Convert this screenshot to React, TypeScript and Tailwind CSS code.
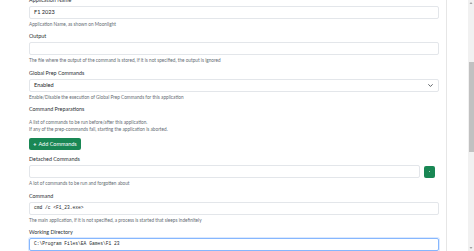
import React from "react";

const Label: React.FC<{ children: React.ReactNode; className?: string }> = ({ children, className = "" }) => (
  <div className={`h-[8px] leading-[8px] text-[5.4px] text-[#2b3035] mb-[2px] ${className}`}>{children}</div>
);

const Hint: React.FC<{ children: React.ReactNode }> = ({ children }) => (
  <div className="mt-[2px] h-[7px] leading-[7px] text-[4.7px] text-[#666d74]">{children}</div>
);

const Input: React.FC<{ value?: string; mono?: boolean; focused?: boolean; className?: string }> = ({
  value = "",
  mono = false,
  focused = false,
  className = "",
}) => (
  <div
    className={`h-[13px] rounded-[2px] border flex items-center px-[4px] text-[#212529] ${
      focused ? "border-[#86b7fe] shadow-[0_0_0_1px_rgba(13,110,253,0.15)]" : "border-[#e3e6ea]"
    } ${mono ? "font-['Liberation_Mono',monospace] text-[4.6px]" : "text-[5.6px]"} ${className}`}
  >
    {value}
  </div>
);

const App: React.FC = () => {
  return (
    <div className="w-[474px] h-[251px] overflow-hidden bg-white flex font-['Lato',sans-serif]">
      <div className="w-[447px] shrink-0 border-r border-[#e6e6e6] pl-[29px] pr-[7px] flex flex-col">
        <Label className="-mt-[4px]">Application Name</Label>
        <Input value="F1 2023" />
        <Hint>Application Name, as shown on Moonlight</Hint>

        <Label className="mt-[4.5px]">Output</Label>
        <Input />
        <Hint>The file where the output of the command is stored, if it is not specified, the output is ignored</Hint>

        <Label className="mt-[4.5px]">Global Prep Commands</Label>
        <div className="h-[13px] rounded-[2px] border border-[#e3e6ea] flex items-center justify-between px-[4px] text-[5.6px] text-[#212529]">
          <span>Enabled</span>
          <svg width="5" height="5" viewBox="0 0 16 16" className="mr-[1px]">
            <path d="M2 5l6 6 6-6" fill="none" stroke="#343a40" strokeWidth="2.5" strokeLinecap="round" strokeLinejoin="round" />
          </svg>
        </div>
        <Hint>Enable/Disable the execution of Global Prep Commands for this application</Hint>

        <Label className="mt-[4.5px] mb-0">Command Preparations</Label>
        <div className="mt-[3.5px] leading-[7px] text-[4.7px] text-[#666d74]">
          <div>A list of commands to be run before/after this application.</div>
          <div>If any of the prep-commands fail, starting the application is aborted.</div>
        </div>
        <div className="mt-[5.5px]">
          <button className="h-[12px] w-[52px] rounded-[2px] bg-[#198754] text-white text-[5.5px] flex items-center justify-center gap-[2px]">
            <span className="font-bold">+</span>
            <span>Add Commands</span>
          </button>
        </div>

        <Label className="mt-[5px]">Detached Commands</Label>
        <div className="flex items-center gap-[4px]">
          <Input className="flex-1" />
          <div className="w-[11px] h-[12px] rounded-[2px] bg-[#198754] flex items-center justify-center mr-[4px]">
            <div className="w-[1.5px] h-[1.5px] bg-white/80 rounded-full" />
          </div>
        </div>
        <Hint>A lot of commands to be run and forgotten about</Hint>

        <Label className="mt-[4.5px]">Command</Label>
        <Input value="cmd /c <F1_23.exe>" mono />
        <Hint>The main application, if it is not specified, a process is started that sleeps indefinitely</Hint>

        <Label className="mt-[4.5px]">Working Directory</Label>
        <Input value="C:\Program Files\EA Games\F1 23" mono focused />
      </div>

      <div className="flex-1" />

      <div className="w-[6px] h-full bg-[#f1f1f1] flex flex-col items-center">
        <svg width="4" height="4" viewBox="0 0 8 8" className="mt-[1px]">
          <path d="M1 6 L4 2 L7 6 Z" fill="#a3a3a3" />
        </svg>
        <div className="mt-[57px] w-[5px] h-[90px] bg-[#c1c1c1]" />
        <div className="flex-1" />
        <svg width="4" height="4" viewBox="0 0 8 8" className="mb-[1px]">
          <path d="M1 2 L4 6 L7 2 Z" fill="#a3a3a3" />
        </svg>
      </div>
    </div>
  );
};

export default App;
